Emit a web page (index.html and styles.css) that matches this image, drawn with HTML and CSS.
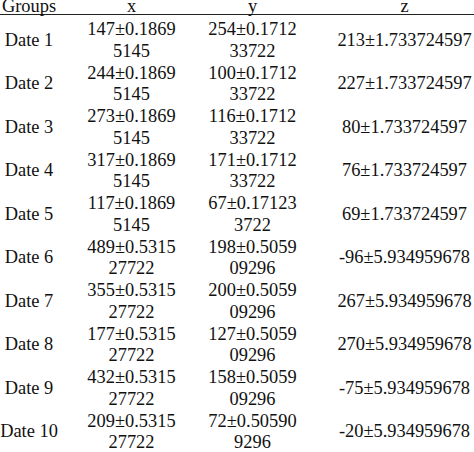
FILE: index.html
```html
<!DOCTYPE html>
<html>
<head>
<meta charset="utf-8">
<link rel="stylesheet" href="styles.css">
</head>
<body>
<div class="table">
  <div class="row head">
    <div class="c g">Groups</div>
    <div class="c x">x</div>
    <div class="c y">y</div>
    <div class="c z">z</div>
  </div>
  <div class="body">
    <div class="row"><div class="c g">Date 1</div><div class="c x"><span class="w">147±0.18695145</span></div><div class="c y"><span class="w">254±0.171233722</span></div><div class="c z">213±1.733724597</div></div>
    <div class="row"><div class="c g">Date 2</div><div class="c x"><span class="w">244±0.18695145</span></div><div class="c y"><span class="w">100±0.171233722</span></div><div class="c z">227±1.733724597</div></div>
    <div class="row"><div class="c g">Date 3</div><div class="c x"><span class="w">273±0.18695145</span></div><div class="c y"><span class="w">116±0.171233722</span></div><div class="c z">80±1.733724597</div></div>
    <div class="row"><div class="c g">Date 4</div><div class="c x"><span class="w">317±0.18695145</span></div><div class="c y"><span class="w">171±0.171233722</span></div><div class="c z">76±1.733724597</div></div>
    <div class="row"><div class="c g">Date 5</div><div class="c x"><span class="w">117±0.18695145</span></div><div class="c y"><span class="w">67±0.171233722</span></div><div class="c z">69±1.733724597</div></div>
    <div class="row"><div class="c g">Date 6</div><div class="c x"><span class="w">489±0.531527722</span></div><div class="c y"><span class="w">198±0.505909296</span></div><div class="c z">-96±5.934959678</div></div>
    <div class="row"><div class="c g">Date 7</div><div class="c x"><span class="w">355±0.531527722</span></div><div class="c y"><span class="w">200±0.505909296</span></div><div class="c z">267±5.934959678</div></div>
    <div class="row"><div class="c g">Date 8</div><div class="c x"><span class="w">177±0.531527722</span></div><div class="c y"><span class="w">127±0.505909296</span></div><div class="c z">270±5.934959678</div></div>
    <div class="row"><div class="c g">Date 9</div><div class="c x"><span class="w">432±0.531527722</span></div><div class="c y"><span class="w">158±0.505909296</span></div><div class="c z">-75±5.934959678</div></div>
    <div class="row"><div class="c g">Date 10</div><div class="c x"><span class="w">209±0.531527722</span></div><div class="c y"><span class="w">72±0.505909296</span></div><div class="c z">-20±5.934959678</div></div>
  </div>
</div>
</body>
</html>
```
FILE: styles.css
```css
html, body {
  margin: 0;
  padding: 0;
  background: #fff;
}
body {
  width: 474px;
  height: 452px;
  overflow: hidden;
  font-family: "Liberation Serif", "Times New Roman", serif;
  font-size: 18.4px;
  color: #111;
}
.table {
  width: 474px;
}
.row {
  display: grid;
  grid-template-columns: 58px 147px 95px 174px;
  height: 43.5px;
  line-height: 21.75px;
}
.row.head {
  height: 14px;
  line-height: 13px;
  border-bottom: 1.5px solid #222;
}
.body {
  padding-top: 4px;
}
.c {
  display: flex;
  align-items: center;
  justify-content: center;
  text-align: center;
  white-space: nowrap;
}
.head .c {
  align-items: flex-start;
}
.c.z {
  padding-left: 35px;
}
.w {
  display: block;
  width: 92px;
  white-space: normal;
  word-break: break-all;
  text-align: center;
}
```
